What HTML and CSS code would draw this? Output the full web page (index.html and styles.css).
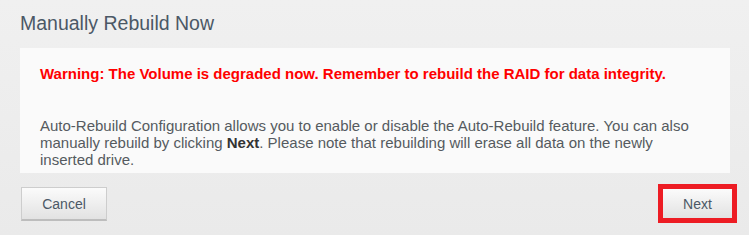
FILE: index.html
```html
<!DOCTYPE html>
<html>
<head>
<meta charset="utf-8">
<link rel="stylesheet" href="styles.css">
</head>
<body>
<div class="page">
  <h1 class="title">Manually Rebuild Now</h1>
  <div class="panel">
    <p class="warning">Warning: The Volume is degraded now. Remember to rebuild the RAID for data integrity.</p>
    <p class="desc">Auto-Rebuild Configuration allows you to enable or disable the Auto-Rebuild feature. You can also manually rebuild by clicking <b>Next</b>. Please note that rebuilding will erase all data on the newly inserted drive.</p>
  </div>
  <div class="actions">
    <button class="btn btn-cancel">Cancel</button>
    <button class="btn btn-next">Next</button>
  </div>
</div>
</body>
</html>
```
FILE: styles.css
```css
html, body {
  margin: 0;
  padding: 0;
}
body {
  width: 749px;
  height: 235px;
  overflow: hidden;
  background: linear-gradient(to bottom, #f0f0f0 0%, #eaeaea 100%);
  font-family: "Liberation Sans", Arial, sans-serif;
}
.page {
  padding: 0 12px 0 20px;
}
.title {
  margin: 0;
  padding-top: 11px;
  height: 48px;
  box-sizing: border-box;
  font-size: 19.5px;
  font-weight: normal;
  line-height: 24px;
  color: #4b5866;
}
.panel {
  width: 710px;
  height: 125px;
  box-sizing: border-box;
  background: #fafafa;
  padding: 17px 20px 0 20px;
}
.warning {
  margin: 0;
  font-size: 15px;
  line-height: 17px;
  font-weight: bold;
  color: #ff0000;
}
.desc {
  margin: 36px 0 0 0;
  font-size: 15px;
  line-height: 16.8px;
  color: #555a60;
}
.desc b {
  color: #333;
}
.actions {
  display: flex;
  justify-content: space-between;
  align-items: flex-start;
  margin-top: 11px;
  padding-left: 1px;
}
.btn {
  font-family: "Liberation Sans", Arial, sans-serif;
  font-size: 14px;
  color: #4b5866;
  background: linear-gradient(to bottom, #fbfbfb 0%, #e2e2e2 100%);
  padding: 0;
  box-sizing: border-box;
  cursor: pointer;
}
.btn-cancel {
  width: 86px;
  height: 34px;
  margin-top: 3px;
  border: 1px solid #cdcdcd;
  border-bottom: 2px solid #bdbdbd;
}
.btn-next {
  width: 79px;
  height: 39px;
  border: 5px solid #ed1c24;
}
```
